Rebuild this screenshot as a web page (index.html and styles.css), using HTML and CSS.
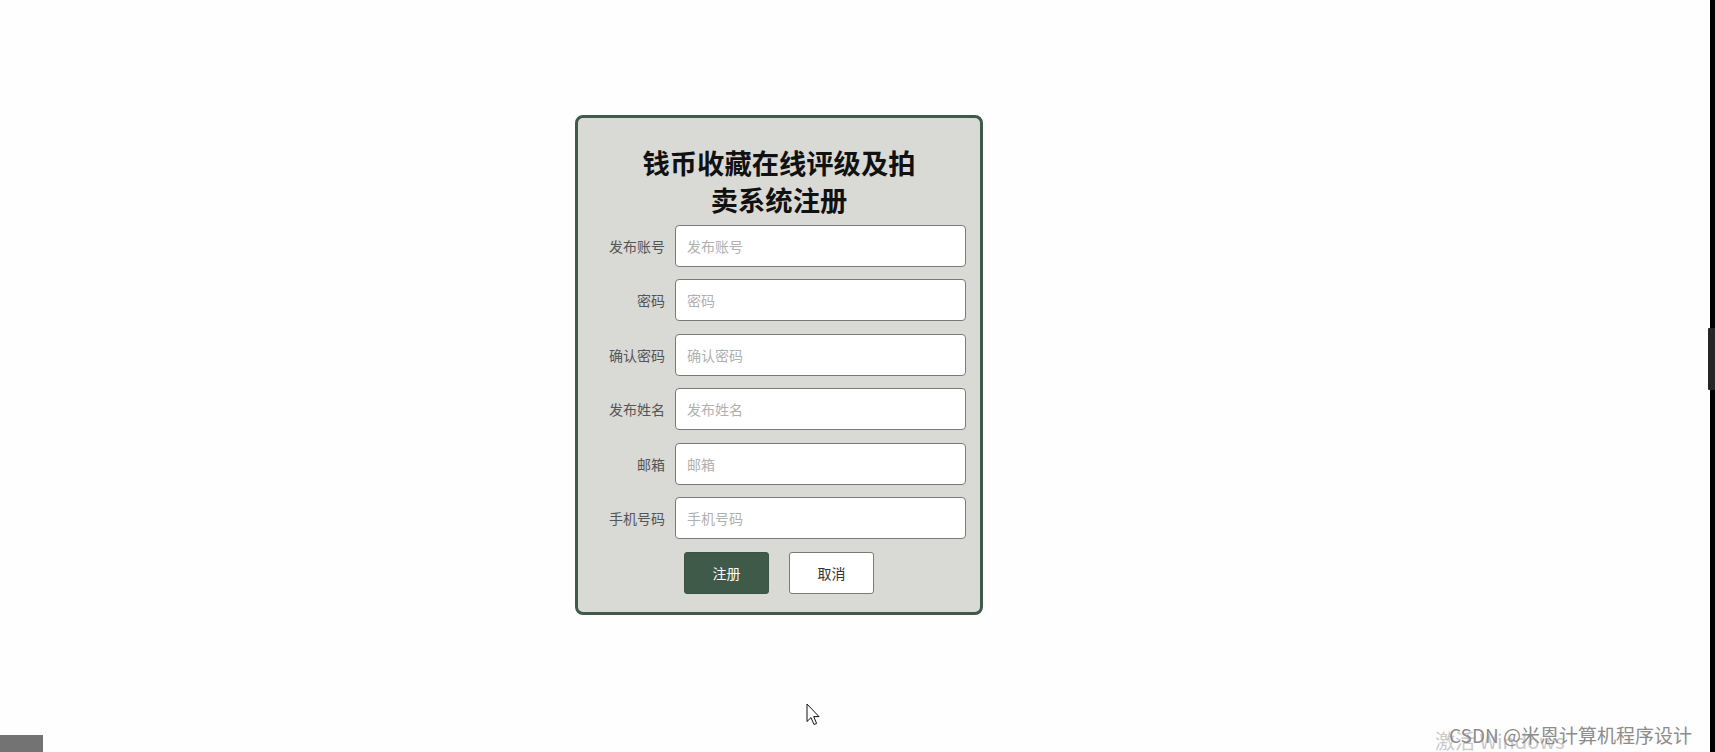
FILE: index.html
```html
<!DOCTYPE html>
<html lang="zh-CN">
<head>
<meta charset="utf-8">
<title>钱币收藏在线评级及拍卖系统注册</title>
<link rel="stylesheet" href="styles.css">
</head>
<body>
<div class="page">
  <form class="card">
    <h2 class="title">钱币收藏在线评级及拍卖系统注册</h2>
    <div class="rows">
      <div class="row"><label class="label">发布账号</label><input class="field" type="text" placeholder="发布账号"></div>
      <div class="row"><label class="label">密码</label><input class="field" type="password" placeholder="密码"></div>
      <div class="row"><label class="label">确认密码</label><input class="field" type="password" placeholder="确认密码"></div>
      <div class="row"><label class="label">发布姓名</label><input class="field" type="text" placeholder="发布姓名"></div>
      <div class="row"><label class="label">邮箱</label><input class="field" type="text" placeholder="邮箱"></div>
      <div class="row"><label class="label">手机号码</label><input class="field" type="text" placeholder="手机号码"></div>
    </div>
    <div class="actions">
      <button type="button" class="btn btn-primary">注册</button>
      <button type="button" class="btn btn-default">取消</button>
    </div>
  </form>
</div>

<div class="taskbar-stub"></div>
<div class="edge-bar"></div>
<div class="edge-thumb"></div>
<svg class="cursor" width="14" height="24" viewBox="0 0 14 24"><path d="M1 1 L1 18.5 L5 14.6 L8 21.5 L10.6 20.4 L7.7 13.6 L13 13.6 Z" fill="#fff" stroke="#111" stroke-width="1" stroke-linejoin="round"/></svg>
<div class="wm-windows">激活 Windows</div>
<div class="wm-csdn">CSDN @米恩计算机程序设计</div>
</body>
</html>
```

FILE: styles.css
```css
html, body {
  margin: 0;
  padding: 0;
}
body {
  background: #fefefe;
  width: 1715px;
  height: 752px;
  overflow: hidden;
  position: relative;
  font-family: "Noto Sans CJK SC", "Noto Sans", sans-serif;
}
.page {
  display: flex;
  flex-direction: column;
  align-items: flex-start;
  padding-top: 115px;
  padding-left: 575px;
}
.card {
  box-sizing: border-box;
  width: 408px;
  border: 3px solid #3f5a48;
  border-radius: 8px;
  background: #d9d9d5;
  padding: 26px 14px 18px 0;
  display: flex;
  flex-direction: column;
  align-items: center;
  margin: 0;
}
.title {
  margin: 0 0 0 14px;
  max-width: 290px;
  text-align: center;
  font-size: 27.3px;
  line-height: 37px;
  font-weight: 700;
  color: #111;
}
.rows {
  margin-top: 6.5px;
  display: flex;
  flex-direction: column;
  gap: 12.5px;
  align-self: stretch;
}
.row {
  display: flex;
  align-items: center;
  height: 42px;
}
.label {
  width: 87px;
  text-align: right;
  font-size: 14px;
  color: #555;
  margin-right: 10px;
  flex: none;
}
.field {
  box-sizing: border-box;
  width: 291px;
  height: 42px;
  border: 1px solid #7a7a7a;
  border-radius: 4px;
  background: #fff;
  padding: 0 11px;
  font-family: inherit;
  font-size: 14px;
  color: #333;
  outline: none;
}
.field::placeholder {
  color: #b0b0b0;
}
.actions {
  margin-top: 13px;
  display: flex;
  gap: 20px;
  justify-content: center;
  padding-left: 14px;
}
.btn {
  box-sizing: border-box;
  width: 85px;
  height: 42px;
  border-radius: 3px;
  font-family: inherit;
  font-size: 14px;
  cursor: pointer;
}
.btn-primary {
  background: #3f5a48;
  border: 1px solid #3a5443;
  color: #fff;
}
.btn-default {
  background: #fff;
  border: 1px solid #7a7a7a;
  color: #333;
}
.taskbar-stub {
  position: absolute;
  left: 0;
  top: 735px;
  width: 43px;
  height: 17px;
  background: #737373;
}
.edge-bar {
  position: absolute;
  right: 0;
  top: 0;
  width: 5px;
  height: 752px;
  background: #000;
}
.edge-thumb {
  position: absolute;
  right: 0;
  top: 328px;
  width: 7px;
  height: 62px;
  background: #262626;
  border-radius: 1px 0 0 1px;
}
.cursor {
  position: absolute;
  left: 806px;
  top: 703px;
}
.wm-windows {
  position: absolute;
  left: 1435px;
  top: 727px;
  font-size: 20px;
  line-height: 28px;
  color: #cacaca;
  white-space: nowrap;
}
.wm-csdn {
  position: absolute;
  left: 1449px;
  top: 723px;
  font-size: 19px;
  line-height: 24px;
  color: #8c8c8c;
  white-space: nowrap;
}
```
